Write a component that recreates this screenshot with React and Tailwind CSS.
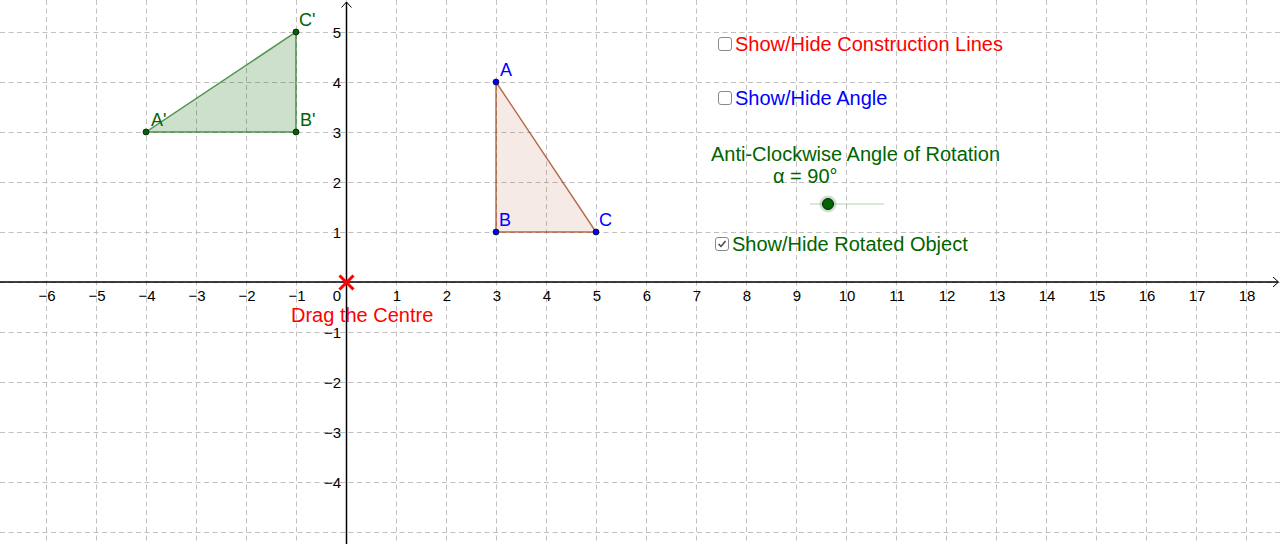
import React from 'react';

// graph space: 50px per unit, origin at (346, 282)
const ox = 346;
const oy = 282;
const u = 50;
const px = ( x ) => ox + x * u;
const py = ( y ) => oy - y * u;

const xs = Array.from( { length: 25 }, ( _, i ) => i - 6 ); // -6 .. 18
const ys = Array.from( { length: 11 }, ( _, i ) => i - 5 ); // -5 .. 5

const label = ( n ) => ( n < 0 ? `\u2212${ Math.abs( n ) }` : `${ n }` );

const Checkbox = ( { checked } ) => (
	<span className="flex items-center justify-center w-[14px] h-[14px] rounded-[3px] border-[1.5px] border-solid border-[#8a8a8a] bg-white">
		{ checked && (
			<svg width="10" height="10" viewBox="0 0 10 10">
				<path d="M1.5 5 L4 7.5 L8.5 2" fill="none" stroke="#444" strokeWidth="1.5" />
			</svg>
		) }
	</span>
);

const Toggle = ( { className, color, checked, children } ) => (
	<div className={ `absolute flex items-center gap-[3px] ${ className }` }>
		<Checkbox checked={ checked } />
		<span className={ `text-[20px] leading-none ${ color }` }>{ children }</span>
	</div>
);

const Point = ( { x, y, fill } ) => (
	<circle cx={ px( x ) } cy={ py( y ) } r="3" fill={ fill } stroke="#111" strokeWidth="0.8" />
);

const App = () => {
	return (
		<div className="relative w-[1280px] h-[544px] overflow-hidden bg-white font-['Liberation_Sans',Arial,sans-serif]">
			<svg className="absolute inset-0" width="1280" height="544" viewBox="0 0 1280 544">
				{ /* grid */ }
				<g stroke="#c0c0c0" strokeWidth="1" strokeDasharray="5 3.5">
					{ xs.map( ( x ) => (
						<line key={ `gx${ x }` } x1={ px( x ) + 0.5 } y1="0" x2={ px( x ) + 0.5 } y2="544" />
					) ) }
					{ ys.map( ( y ) => (
						<line key={ `gy${ y }` } x1="0" y1={ py( y ) + 0.5 } x2="1280" y2={ py( y ) + 0.5 } />
					) ) }
				</g>

				{ /* axes */ }
				<g stroke="#000" strokeWidth="1.5" fill="none">
					<line x1="0" y1={ oy } x2="1278" y2={ oy } />
					<line x1={ ox + 0.5 } y1="544" x2={ ox + 0.5 } y2="2" />
					<path d={ `M1273 ${ oy - 5 } L1278.5 ${ oy } L1273 ${ oy + 5 }` } strokeWidth="1" />
					<path d={ `M${ ox - 4.5 } 7.5 L${ ox + 0.5 } 2 L${ ox + 5.5 } 7.5` } strokeWidth="1" />
				</g>

				{ /* tick labels */ }
				<g fontSize="15" fill="#000">
					{ xs.filter( ( x ) => x !== 0 ).map( ( x ) => (
						<text key={ `lx${ x }` } x={ px( x ) + 1 } y="301" textAnchor="middle">
							{ label( x ) }
						</text>
					) ) }
					<text x="341" y="301" textAnchor="end">0</text>
					{ ys.filter( ( y ) => y !== 0 && y > -5 ).map( ( y ) => (
						<text key={ `ly${ y }` } x="341" y={ py( y ) + 6 } textAnchor="end">
							{ label( y ) }
						</text>
					) ) }
				</g>

				{ /* rotated image A'B'C' */ }
				<polygon
					points={ `${ px( -4 ) },${ py( 3 ) } ${ px( -1 ) },${ py( 3 ) } ${ px( -1 ) },${ py( 5 ) }` }
					fill="#006400"
					fillOpacity="0.2"
					stroke="#006400"
					strokeOpacity="0.65"
					strokeWidth="1.5"
				/>

				{ /* object ABC */ }
				<polygon
					points={ `${ px( 3 ) },${ py( 4 ) } ${ px( 3 ) },${ py( 1 ) } ${ px( 5 ) },${ py( 1 ) }` }
					fill="#993300"
					fillOpacity="0.1"
					stroke="#993300"
					strokeOpacity="0.7"
					strokeWidth="1.5"
				/>

				<Point x={ -4 } y={ 3 } fill="#006400" />
				<Point x={ -1 } y={ 3 } fill="#006400" />
				<Point x={ -1 } y={ 5 } fill="#006400" />
				<Point x={ 3 } y={ 4 } fill="#0000ff" />
				<Point x={ 3 } y={ 1 } fill="#0000ff" />
				<Point x={ 5 } y={ 1 } fill="#0000ff" />

				<g fontSize="18">
					<text x="151" y="126" fill="#006400">A'</text>
					<text x="300" y="126" fill="#006400">B'</text>
					<text x="299" y="26" fill="#006400">C'</text>
					<text x="500" y="76" fill="#0000ff">A</text>
					<text x="499" y="226" fill="#0000ff">B</text>
					<text x="599" y="226" fill="#0000ff">C</text>
				</g>

				{ /* centre of rotation */ }
				<g stroke="#ff0000" strokeWidth="3">
					<line x1={ ox - 6.5 } y1={ oy - 6.5 } x2={ ox + 7.5 } y2={ oy + 7.5 } />
					<line x1={ ox + 7.5 } y1={ oy - 6.5 } x2={ ox - 6.5 } y2={ oy + 7.5 } />
				</g>
				<text x="291" y="322" fontSize="20" fill="#ff0000">
					Drag the Centre
				</text>

				{ /* angle slider */ }
				<g fontSize="20" fill="#006400">
					<text x="711" y="161">Anti-Clockwise Angle of Rotation</text>
					<text x="773" y="183">α = 90°</text>
				</g>
				<line x1="810" y1="204" x2="884" y2="204" stroke="#006400" strokeOpacity="0.3" strokeWidth="1" />
				<circle cx="828" cy="204" r="8.5" fill="#006400" fillOpacity="0.2" />
				<circle cx="828" cy="204" r="5.5" fill="#006400" stroke="#0a1f0a" strokeWidth="1" />
			</svg>

			<Toggle className="left-[718px] top-[34px]" color="text-[#ff0000]">
				Show/Hide Construction Lines
			</Toggle>
			<Toggle className="left-[718px] top-[88px]" color="text-[#0000ff]">
				Show/Hide Angle
			</Toggle>
			<Toggle className="left-[715px] top-[234px]" color="text-[#006400]" checked>
				Show/Hide Rotated Object
			</Toggle>
		</div>
	);
};

export default App;
